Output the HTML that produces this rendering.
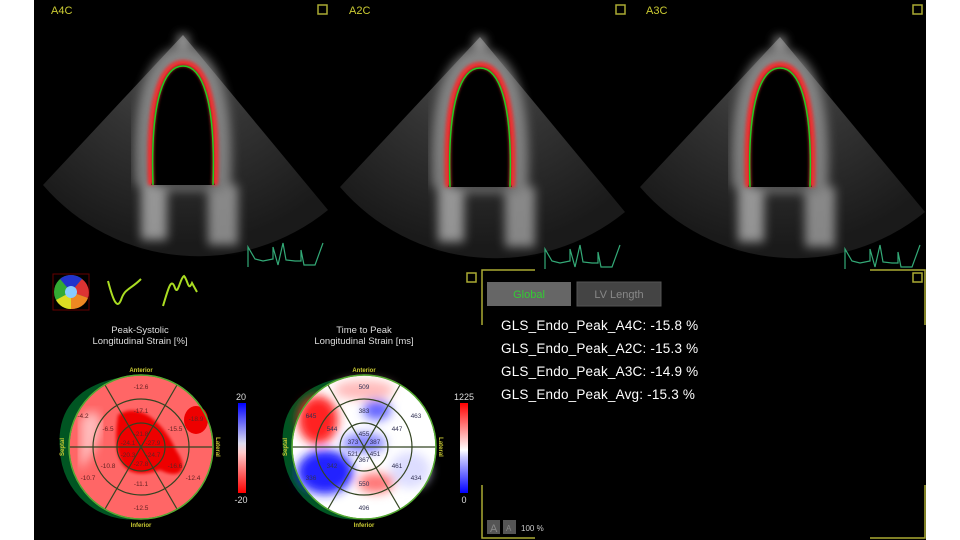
<!DOCTYPE html>
<html><head><meta charset="utf-8"><style>
body{margin:0;width:960px;height:540px;background:#fff;overflow:hidden;font-family:"Liberation Sans",sans-serif}
#m{position:absolute;left:34px;top:0;width:892px;height:540px;background:#000}
.t{position:absolute;color:#fff;font-size:13.5px;left:501px;letter-spacing:0.2px}
</style></head><body>
<div id="m"></div>
<svg width="960" height="540" style="position:absolute;left:0;top:0">
<defs>
<radialGradient id="fg" cx="0" cy="0" r="210" gradientUnits="userSpaceOnUse">
<stop offset="0" stop-color="#555"/><stop offset="0.5" stop-color="#333"/><stop offset="1" stop-color="#1a1a1a"/></radialGradient>
<filter id="bl"><feGaussianBlur stdDeviation="5"/></filter>
<filter id="bl2"><feGaussianBlur stdDeviation="1.5"/></filter>
<g id="echo">
<path d="M0,0 L-140,150 A205,205 0 0 0 145,175 Z" fill="url(#fg)"/>
<g filter="url(#bl)" opacity="0.75">
<path d="M-38,150 C-42,55 -22,22 0,22 C22,22 42,55 38,150" stroke="#999" stroke-width="20" fill="none"/>
<rect x="-42" y="150" width="26" height="55" fill="#bbb"/>
<rect x="25" y="150" width="30" height="60" fill="#aaa"/>
<rect x="-20" y="148" width="60" height="8" fill="#888"/>
<circle cx="0" cy="5" r="6" fill="#ccc"/>
</g>
<path d="M-32,150 C-36,60 -20,28 0,28 C20,28 36,60 32,150 Z" fill="#000"/>
<path d="M-32,150 C-36,60 -20,28 0,28 C20,28 36,60 32,150" stroke="#e33" stroke-width="6" fill="none" filter="url(#bl2)"/>
<path d="M-30,150 C-33,62 -18,31 0,31 C18,31 33,62 30,150" stroke="#2c2" stroke-width="1.5" fill="none"/>
<polyline points="65,232 65,212 72,224 80,226 90,224 90,212 95,230 100,208 103,225 112,226 118,226 118,215 121,230 132,230 140,208" stroke="#3a7" stroke-width="1.2" fill="none"/>
</g>
</defs>
<use href="#echo" x="183" y="35"/>
<use href="#echo" x="480" y="37"/>
<use href="#echo" x="780" y="37"/>
<g fill="#cc3" font-size="11"><text x="51" y="14">A4C</text><text x="349" y="14">A2C</text><text x="646" y="14">A3C</text></g>
<g fill="none" stroke="#aa3" stroke-width="1.5"><rect x="318" y="5" width="9" height="9"/><rect x="616" y="5" width="9" height="9"/><rect x="913" y="5" width="9" height="9"/><rect x="467" y="273" width="9" height="9"/><rect x="913" y="273" width="9" height="9"/></g>
<g stroke="#aa3" stroke-width="1.5" fill="none"><path d="M482,325 V270 H535"/><path d="M870,270 H925 V325"/><path d="M482,485 V538 H535"/><path d="M870,538 H925 V485"/></g>
<rect x="53" y="274" width="36" height="36" fill="none" stroke="#600"/>
<circle cx="71" cy="292" r="17" fill="#3a3"/>
<path d="M71,292 L60,279 A17,17 0 0 1 82,279 Z" fill="#23c"/>
<path d="M71,292 L82,279 A17,17 0 0 1 88,298 Z" fill="#d33"/>
<path d="M71,292 L88,298 A17,17 0 0 1 71,309 Z" fill="#e82"/>
<path d="M71,292 L71,309 A17,17 0 0 1 56,300 Z" fill="#dd2"/>
<circle cx="71" cy="292" r="6" fill="#8cf"/>
<path d="M108,281 C113,300 117,310 121,300 C125,288 130,290 141,279" stroke="#ad2" stroke-width="2" fill="none"/>
<path d="M163,306 C168,290 171,276 175,288 C178,296 180,278 184,276 C188,280 188,292 192,283 L197,292" stroke="#ad2" stroke-width="2" fill="none"/>
<g fill="#ddd" font-size="9.5" text-anchor="middle"><text x="140" y="333">Peak-Systolic</text><text x="140" y="344">Longitudinal Strain [%]</text><text x="364" y="333">Time to Peak</text><text x="364" y="344">Longitudinal Strain [ms]</text></g>
<path d="M110,382 A73,73 0 0 0 104,511 A72,72 0 0 1 110,382 Z" fill="#040" stroke="#cd5"/>
<path d="M141,375 A72,72 0 1 1 141,519 A72,72 0 0 1 60,450 C55,400 90,378 141,375Z" fill="#052"/>
<circle cx="141" cy="447" r="72" fill="#f66"/>
<path d="M80,420 C100,395 115,430 80,470Z" fill="#fbb" filter="url(#bl)"/>
<path d="M118,415 C140,400 165,425 176,450 C190,470 180,480 160,470 C130,480 110,470 118,415Z" fill="#e00" filter="url(#bl2)"/>
<ellipse cx="196" cy="420" rx="12" ry="14" fill="#e00"/>
<g stroke="#342" stroke-width="1.2" fill="none"><circle cx="141" cy="447" r="72"/><circle cx="141" cy="447" r="48"/><circle cx="141" cy="447" r="24"/>
<line x1="69" y1="447" x2="213" y2="447"/><line x1="105" y1="385" x2="177" y2="509"/><line x1="177" y1="385" x2="105" y2="509"/></g>
<circle cx="141" cy="447" r="72" fill="none" stroke="#5a3" stroke-width="1.5"/>
<g font-size="6.5" fill="#622" text-anchor="middle"><text x="141" y="389">-12.6</text><text x="141" y="413">-17.1</text><text x="83" y="418">-4.2</text><text x="108" y="431">-6.5</text><text x="175" y="431">-15.5</text><text x="196" y="421">-18.9</text><text x="108" y="468">-10.8</text><text x="88" y="480">-10.7</text><text x="175" y="468">-16.6</text><text x="193" y="480">-12.4</text><text x="141" y="486">-11.1</text><text x="141" y="510">-12.5</text><text x="141" y="436">-21.8</text><text x="128" y="445">-24.1</text><text x="153" y="445">-27.9</text><text x="128" y="457">-20.3</text><text x="153" y="457">-24.7</text><text x="141" y="466">-27.8</text></g>
<g font-size="6" fill="#cc3" font-weight="bold" text-anchor="middle"><text x="141" y="372">Anterior</text><text x="141" y="527">Inferior</text><text transform="translate(64,447) rotate(-90)">Septal</text><text transform="translate(216,447) rotate(90)">Lateral</text></g>
<defs><linearGradient id="c1" x1="0" y1="0" x2="0" y2="1"><stop offset="0" stop-color="#00f"/><stop offset="0.45" stop-color="#dde"/><stop offset="0.55" stop-color="#fcc"/><stop offset="1" stop-color="#f00"/></linearGradient>
<linearGradient id="c2" x1="0" y1="0" x2="0" y2="1"><stop offset="0" stop-color="#f00"/><stop offset="0.45" stop-color="#fdd"/><stop offset="0.52" stop-color="#fff"/><stop offset="0.6" stop-color="#ccf"/><stop offset="1" stop-color="#00f"/></linearGradient></defs>
<rect x="238" y="403" width="8" height="90" fill="url(#c1)"/>
<rect x="460" y="403" width="8" height="90" fill="url(#c2)"/>
<g fill="#ddd" font-size="9" text-anchor="middle"><text x="241" y="400">20</text><text x="241" y="503">-20</text><text x="464" y="400">1225</text><text x="464" y="503">0</text></g>
<path d="M333,382 A73,73 0 0 0 327,511 A72,72 0 0 1 333,382 Z" fill="#040" stroke="#cd5"/>
<path d="M364,375 A72,72 0 1 1 364,519 A72,72 0 0 1 283,450 C278,400 313,378 364,375Z" fill="#052"/>
<circle cx="364" cy="447" r="72" fill="#fff"/>
<g filter="url(#bl)"><ellipse cx="318" cy="420" rx="20" ry="24" fill="#f22"/><ellipse cx="325" cy="472" rx="28" ry="22" fill="#22f"/><ellipse cx="377" cy="410" rx="14" ry="10" fill="#66f"/><ellipse cx="364" cy="443" rx="22" ry="10" fill="#88f"/><ellipse cx="376" cy="483" rx="18" ry="10" fill="#f77"/><ellipse cx="364" cy="390" rx="30" ry="10" fill="#fbb"/><ellipse cx="410" cy="470" rx="20" ry="18" fill="#ddf"/></g>
<g stroke="#342" stroke-width="1.2" fill="none"><circle cx="364" cy="447" r="72"/><circle cx="364" cy="447" r="48"/><circle cx="364" cy="447" r="24"/>
<line x1="292" y1="447" x2="436" y2="447"/><line x1="328" y1="385" x2="400" y2="509"/><line x1="400" y1="385" x2="328" y2="509"/></g>
<circle cx="364" cy="447" r="72" fill="none" stroke="#5a3" stroke-width="1.5"/>
<g font-size="6.5" fill="#335" text-anchor="middle"><text x="364" y="389">509</text><text x="364" y="413">383</text><text x="311" y="418">645</text><text x="332" y="431">544</text><text x="397" y="431">447</text><text x="416" y="418">463</text><text x="332" y="468">342</text><text x="311" y="480">336</text><text x="397" y="468">461</text><text x="416" y="480">434</text><text x="364" y="486">550</text><text x="364" y="510">496</text><text x="364" y="436">455</text><text x="353" y="444">373</text><text x="375" y="444">387</text><text x="353" y="456">521</text><text x="375" y="456">451</text><text x="364" y="462">367</text></g>
<g font-size="6" fill="#cc3" font-weight="bold" text-anchor="middle"><text x="364" y="372">Anterior</text><text x="364" y="527">Inferior</text><text transform="translate(287,447) rotate(-90)">Septal</text><text transform="translate(439,447) rotate(90)">Lateral</text></g>
<rect x="487" y="282" width="84" height="24" fill="#666"/>
<rect x="577" y="282" width="84" height="24" fill="#444" stroke="#555"/>
<text x="529" y="298" fill="#3c3" font-size="11" text-anchor="middle">Global</text>
<text x="619" y="298" fill="#888" font-size="11" text-anchor="middle">LV Length</text>
<rect x="487" y="520" width="13" height="14" fill="#555"/><rect x="503" y="520" width="13" height="14" fill="#555"/>
<text x="490" y="532" fill="#888" font-size="11">A</text><text x="506" y="531" fill="#888" font-size="8">A</text>
<text x="521" y="531" fill="#ccc" font-size="8">100 %</text>
</svg>
<div class="t" style="top:318px">GLS_Endo_Peak_A4C: -15.8 %</div>
<div class="t" style="top:341px">GLS_Endo_Peak_A2C: -15.3 %</div>
<div class="t" style="top:364px">GLS_Endo_Peak_A3C: -14.9 %</div>
<div class="t" style="top:387px">GLS_Endo_Peak_Avg: -15.3 %</div>
</body></html>
